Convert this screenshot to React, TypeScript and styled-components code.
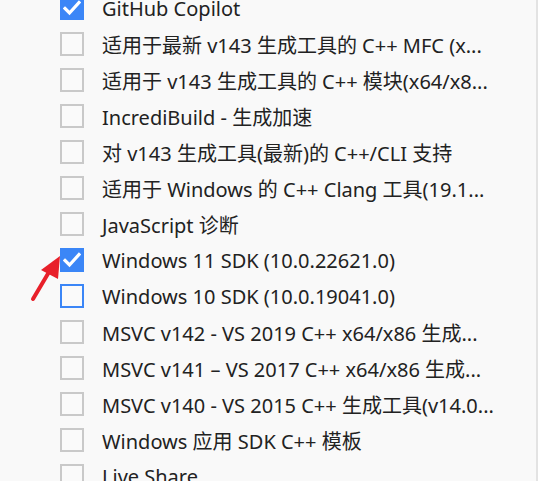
import React from "react";
import styled, { createGlobalStyle } from "styled-components";

const GlobalStyle = createGlobalStyle`
  html, body {
    margin: 0;
    padding: 0;
    background: #f9f9f9;
    overflow: hidden;
  }
`;

const Page = styled.div`
  position: relative;
  width: 538px;
  height: 481px;
  overflow: hidden;
  box-sizing: border-box;
  border-right: 2px solid #e3e3e3;
  font-family: "Noto Sans", "Noto Sans CJK SC", sans-serif;
`;

const List = styled.ul`
  list-style: none;
  margin: -10px 0 0 0;
  padding: 0 0 0 60px;
`;

const Row = styled.li`
  display: flex;
  align-items: center;
  gap: 18px;
  height: 36px;
`;

const Box = styled.span<{ $checked?: boolean; $focus?: boolean }>`
  flex: none;
  box-sizing: border-box;
  width: 24px;
  height: 24px;
  display: flex;
  align-items: center;
  justify-content: center;
  background: ${(p) => (p.$checked ? "#3b86f7" : "#fafafa")};
  border: 2px solid
    ${(p) => (p.$checked || p.$focus ? "#3b86f7" : "#c9c9c9")};
`;

const Label = styled.span`
  font-size: 20px;
  color: #222;
  white-space: nowrap;
`;

const Arrow = styled.svg`
  position: absolute;
  left: 26px;
  top: 250px;
`;

const items: { text: string; checked?: boolean; focus?: boolean }[] = [
  { text: "GitHub Copilot", checked: true },
  { text: "适用于最新 v143 生成工具的 C++ MFC (x..." },
  { text: "适用于 v143 生成工具的 C++ 模块(x64/x8..." },
  { text: "IncrediBuild - 生成加速" },
  { text: "对 v143 生成工具(最新)的 C++/CLI 支持" },
  { text: "适用于 Windows 的 C++ Clang 工具(19.1..." },
  { text: "JavaScript 诊断" },
  { text: "Windows 11 SDK (10.0.22621.0)", checked: true },
  { text: "Windows 10 SDK (10.0.19041.0)", focus: true },
  { text: "MSVC v142 - VS 2019 C++ x64/x86 生成..." },
  { text: "MSVC v141 – VS 2017 C++ x64/x86 生成..." },
  { text: "MSVC v140 - VS 2015 C++ 生成工具(v14.0..." },
  { text: "Windows 应用 SDK C++ 模板" },
  { text: "Live Share" },
];

const Check = () => (
  <svg width="18" height="16" viewBox="0 0 18 16">
    <path
      d="M2 8.5 L6.5 13 L16 2.5"
      fill="none"
      stroke="#fff"
      strokeWidth="3.2"
      strokeLinecap="square"
      strokeLinejoin="miter"
    />
  </svg>
);

export default function App() {
  return (
    <>
      <GlobalStyle />
      <Page>
        <List>
          {items.map((it) => (
            <Row key={it.text}>
              <Box $checked={it.checked} $focus={it.focus}>
                {it.checked && <Check />}
              </Box>
              <Label>{it.text}</Label>
            </Row>
          ))}
        </List>
        <Arrow width="40" height="56" viewBox="0 0 40 56">
          <line
            x1="7"
            y1="49"
            x2="23"
            y2="22"
            stroke="#e8202a"
            strokeWidth="4"
            strokeLinecap="round"
          />
          <polygon points="34,6 32,29 15,20" fill="#e8202a" />
        </Arrow>
      </Page>
    </>
  );
}
